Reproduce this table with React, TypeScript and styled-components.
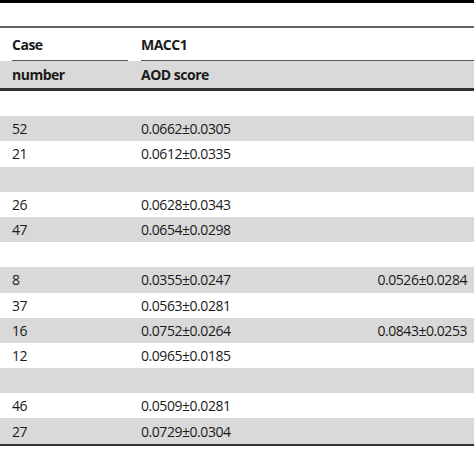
import styled, { createGlobalStyle } from 'styled-components';

const Global = createGlobalStyle`
  html, body {
    margin: 0;
    padding: 0;
    background: #fff;
  }
  body {
    font-family: "Open Sans", "Liberation Sans", sans-serif;
    color: #1a1a1a;
  }
`;

const Sheet = styled.div`
  width: 474px;
  border-top: 3px solid #000;
  padding-top: 23px;
`;

const Head = styled.div`
  border-top: 2px solid #666;
  border-bottom: 3px solid #333;
`;

const HeadRow = styled.div<{ $shade?: boolean }>`
  display: grid;
  grid-template-columns: 141px 1fr;
  height: ${p => (p.$shade ? '27px' : '33px')};
  background: ${p => (p.$shade ? '#d9d9d9' : '#fff')};
`;

const HeadCell = styled.div<{ $first?: boolean; $rule?: boolean }>`
  display: flex;
  align-items: center;
  margin-left: ${p => (p.$first ? '12px' : '0')};
  margin-right: ${p => (p.$first ? '13px' : '0')};
  border-bottom: ${p => (p.$rule ? '1.5px solid #555' : 'none')};
  font-weight: 700;
  font-size: 14px;
  letter-spacing: -0.5px;
`;

const Body = styled.div`
  border-bottom: 2px solid #333;
`;

const Row = styled.div<{ $shade: boolean }>`
  display: grid;
  grid-template-columns: 141px 89px 1fr;
  padding-right: 7px;
  height: 25.2px;
  align-items: center;
  background: ${p => (p.$shade ? '#d9d9d9' : '#fff')};
  font-size: 14px;
  letter-spacing: -0.45px;
`;

const CaseCell = styled.div`
  padding-left: 12px;
`;

const Value = styled.div`
  text-align: right;
  white-space: nowrap;
`;

type Line = { n?: string; a?: string; b?: string };

const rows: Line[] = [
  {},
  { n: '52', a: '0.0662±0.0305' },
  { n: '21', a: '0.0612±0.0335' },
  {},
  { n: '26', a: '0.0628±0.0343' },
  { n: '47', a: '0.0654±0.0298' },
  {},
  { n: '8', a: '0.0355±0.0247', b: '0.0526±0.0284' },
  { n: '37', a: '0.0563±0.0281' },
  { n: '16', a: '0.0752±0.0264', b: '0.0843±0.0253' },
  { n: '12', a: '0.0965±0.0185' },
  {},
  { n: '46', a: '0.0509±0.0281' },
  { n: '27', a: '0.0729±0.0304' },
];

const App = () => {
  return (
    <Sheet>
      <Global />
      <Head>
        <HeadRow>
          <HeadCell $first $rule>Case</HeadCell>
          <HeadCell $rule>MACC1</HeadCell>
        </HeadRow>
        <HeadRow $shade>
          <HeadCell $first>number</HeadCell>
          <HeadCell>AOD score</HeadCell>
        </HeadRow>
      </Head>
      <Body>
        {rows.map((r, i) => (
          <Row key={i} $shade={i % 2 === 1}>
            <CaseCell>{r.n}</CaseCell>
            <Value>{r.a}</Value>
            <Value>{r.b}</Value>
          </Row>
        ))}
      </Body>
    </Sheet>
  );
};

export default App;
